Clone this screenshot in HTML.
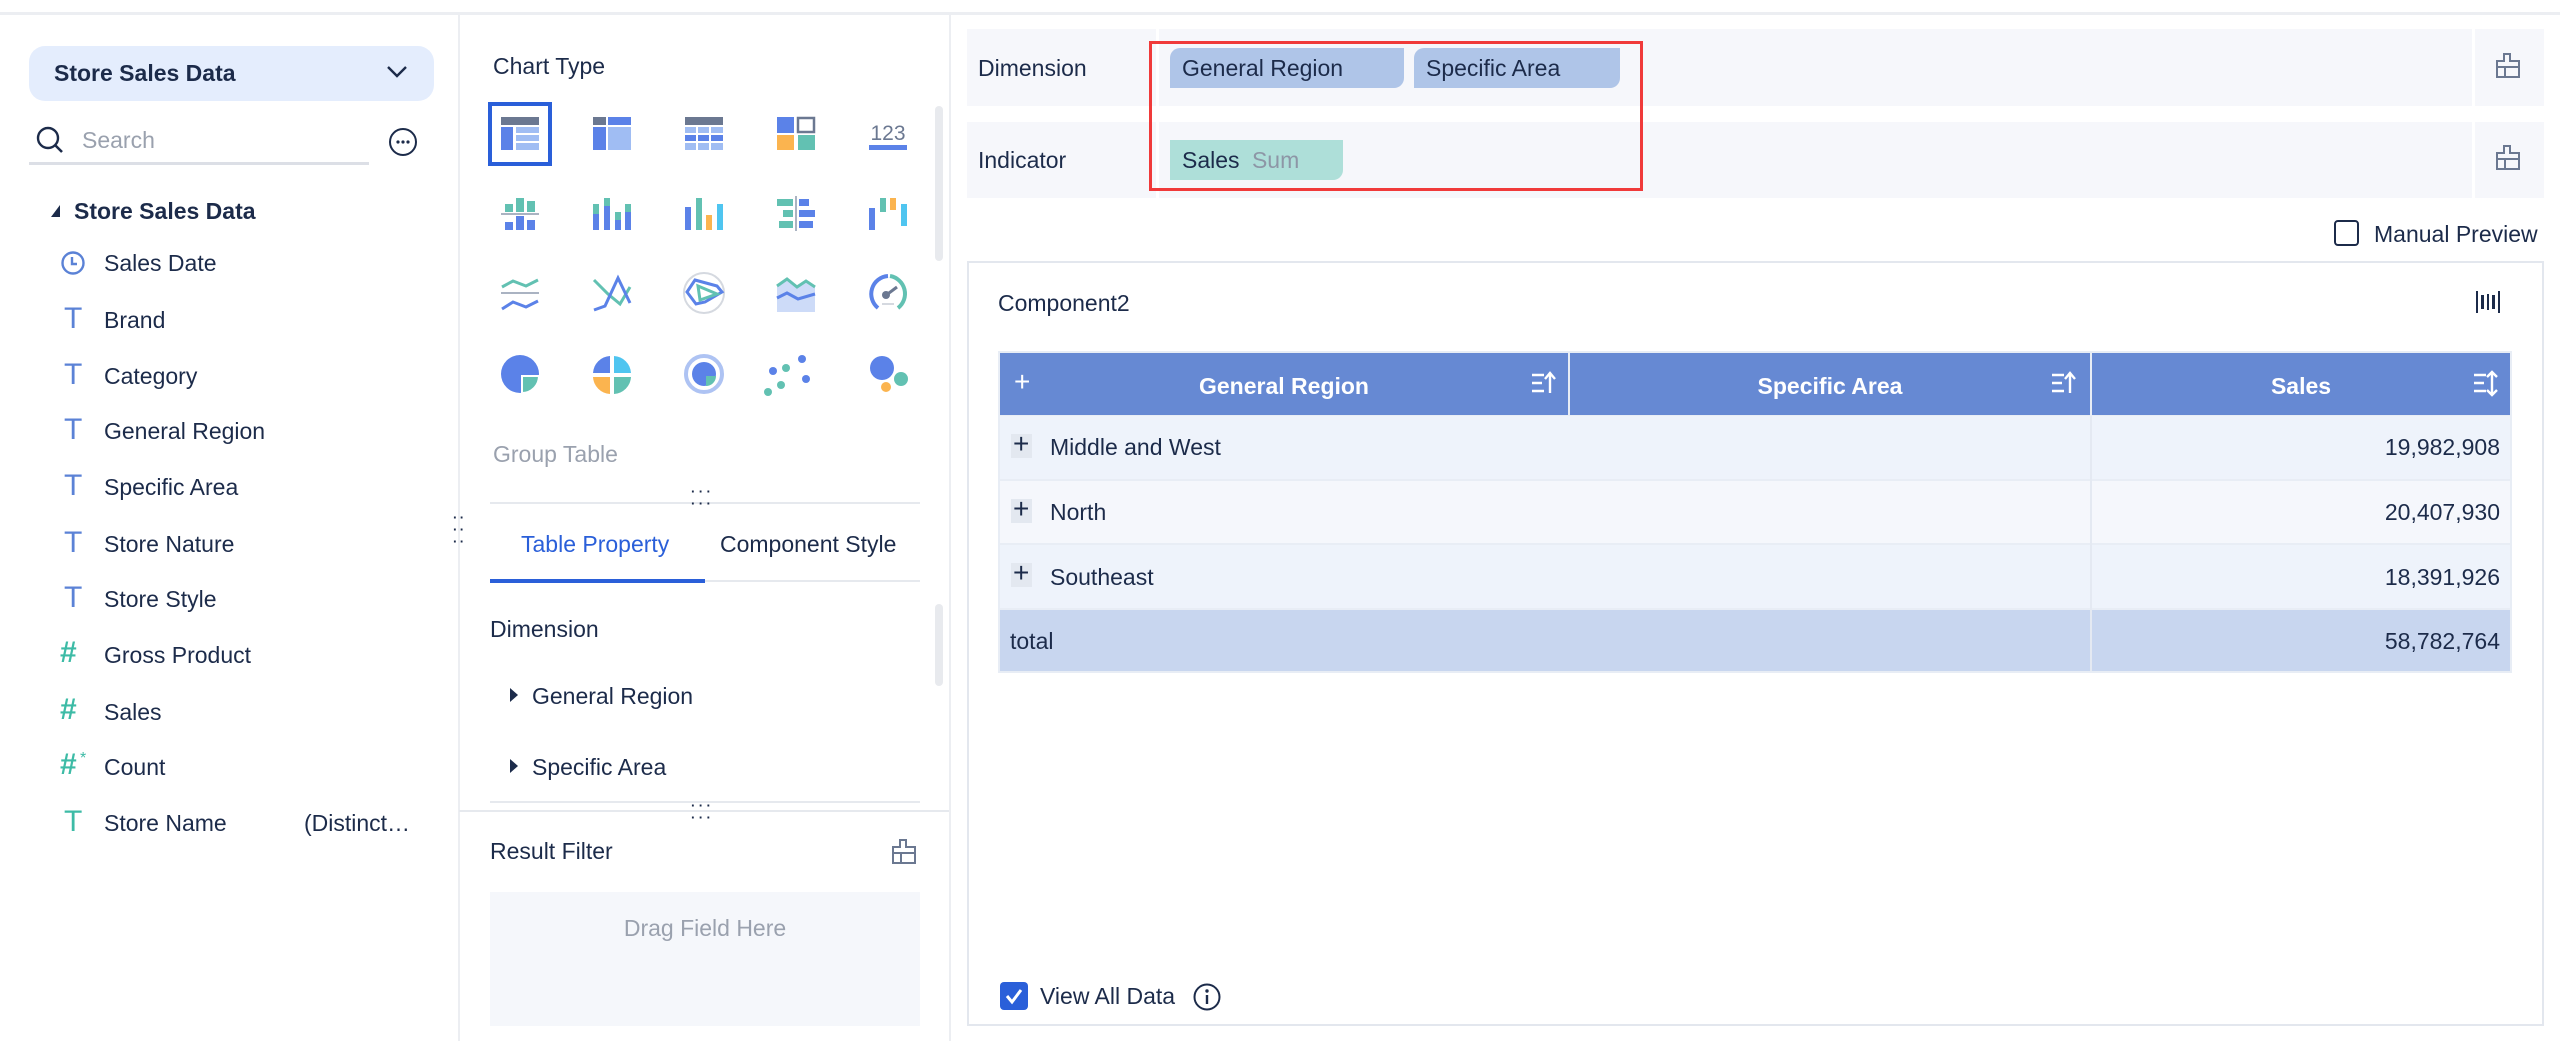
<!DOCTYPE html>
<html><head><meta charset="utf-8">
<style>
*{margin:0;padding:0;box-sizing:border-box}
body{width:2560px;height:1041px;background:#fff;font-family:"Liberation Sans",sans-serif;color:#1c2b4a;position:relative;overflow:hidden}
.a{position:absolute}
.t{position:absolute;font-size:23px;line-height:28px;white-space:nowrap}
</style></head><body>
<div class="a" style="left:0;top:12px;width:2560px;height:3px;background:#eceef2"></div>
<div class="a" style="left:458px;top:14px;width:2px;height:1027px;background:#eceef2"></div>
<div class="a" style="left:949px;top:14px;width:2px;height:1027px;background:#eceef2"></div>

<!-- left panel -->
<div class="a" style="left:29px;top:46px;width:405px;height:55px;background:#e4edfd;border-radius:16px"></div>
<div class="t" style="left:54px;top:59px;font-weight:bold;font-size:23px">Store Sales Data</div>
<svg class="a" style="left:386px;top:64px" width="22" height="16"><path d="M2 3 L11 12 L20 3" stroke="#1c2b4a" stroke-width="2.4" fill="none"/></svg>
<svg class="a" style="left:34px;top:124px" width="32" height="32"><circle cx="14" cy="14" r="10" stroke="#1c2b4a" stroke-width="2.4" fill="none"/><path d="M21 21 L28 28" stroke="#1c2b4a" stroke-width="2.6"/></svg>
<div class="t" style="left:82px;top:126px;color:#9aa1ae">Search</div>
<div class="a" style="left:29px;top:162px;width:340px;height:3px;background:#dcdfe6"></div>
<svg class="a" style="left:387px;top:126px" width="32" height="32"><circle cx="16" cy="16" r="13" stroke="#1c2b4a" stroke-width="2" fill="none"/><circle cx="11" cy="16" r="1.6" fill="#1c2b4a"/><circle cx="16" cy="16" r="1.6" fill="#1c2b4a"/><circle cx="21" cy="16" r="1.6" fill="#1c2b4a"/></svg>
<svg class="a" style="left:50px;top:204px" width="12" height="14"><path d="M10 1 L10 13 L1 13 Z" fill="#1c2b4a"/></svg>
<div class="t" style="left:74px;top:197px;font-weight:bold">Store Sales Data</div>

<svg class="a" style="left:60px;top:250px" width="26" height="26"><circle cx="13" cy="13" r="10.5" stroke="#5b82d6" stroke-width="2.4" fill="none"/><path d="M12 7 V14 H17" stroke="#5b82d6" stroke-width="2.4" fill="none"/></svg>
<div class="t" style="left:104px;top:249px">Sales Date</div>

<div class="t" style="left:64px;top:305px;color:#5b82d6;font-size:30px">T</div><div class="t" style="left:104px;top:306px">Brand</div>
<div class="t" style="left:64px;top:361px;color:#5b82d6;font-size:30px">T</div><div class="t" style="left:104px;top:362px">Category</div>
<div class="t" style="left:64px;top:416px;color:#5b82d6;font-size:30px">T</div><div class="t" style="left:104px;top:417px">General Region</div>
<div class="t" style="left:64px;top:472px;color:#5b82d6;font-size:30px">T</div><div class="t" style="left:104px;top:473px">Specific Area</div>
<div class="t" style="left:64px;top:529px;color:#5b82d6;font-size:30px">T</div><div class="t" style="left:104px;top:530px">Store Nature</div>
<div class="t" style="left:64px;top:584px;color:#5b82d6;font-size:30px">T</div><div class="t" style="left:104px;top:585px">Store Style</div>
<div class="t" style="left:60px;top:639px;color:#3dbba6;font-size:30px;font-weight:bold">#</div><div class="t" style="left:104px;top:641px">Gross Product</div>
<div class="t" style="left:60px;top:696px;color:#3dbba6;font-size:30px;font-weight:bold">#</div><div class="t" style="left:104px;top:698px">Sales</div>
<div class="t" style="left:60px;top:751px;color:#3dbba6;font-size:30px;font-weight:bold">#</div><div class="t" style="left:80px;top:745px;color:#3dbba6;font-size:16px">*</div><div class="t" style="left:104px;top:753px">Count</div>
<div class="t" style="left:64px;top:808px;color:#3dbba6;font-size:30px">T</div><div class="t" style="left:104px;top:809px">Store Name</div>
<div class="t" style="left:304px;top:809px">(Distinct…</div>

<!-- middle panel -->
<div class="t" style="left:493px;top:52px">Chart Type</div>
<div class="a" style="left:488px;top:102px;width:64px;height:64px;border:4px solid #2a5fd9"></div>
<svg class="a" style="left:480px;top:90px" width="440" height="330">
<!-- row1 -->
<rect x="21" y="27" width="38" height="8" fill="#6b7891"/><rect x="21" y="37" width="12" height="23" fill="#5b82e8"/><rect x="36" y="37" width="23" height="6" fill="#a0bdf3"/><rect x="36" y="45" width="23" height="6" fill="#a0bdf3"/><rect x="36" y="53" width="23" height="7" fill="#a0bdf3"/>
<rect x="113" y="27" width="13" height="8" fill="#6b7891"/><rect x="128" y="27" width="23" height="8" fill="#5b82e8"/><rect x="113" y="37" width="13" height="23" fill="#5b82e8"/><rect x="128" y="37" width="23" height="23" fill="#a0bdf3"/>
<rect x="205" y="27" width="38" height="8" fill="#6b7891"/><rect x="205" y="37" width="38" height="6" fill="#a0bdf3"/><rect x="205" y="45" width="38" height="6" fill="#5b82e8"/><rect x="205" y="53" width="38" height="7" fill="#a0bdf3"/><path d="M217 37 V60 M230 37 V60" stroke="#fff" stroke-width="2"/>
<rect x="297" y="27" width="17" height="16" fill="#5b82e8"/><rect x="318" y="28" width="16" height="14" fill="none" stroke="#6b7891" stroke-width="2.5"/><rect x="297" y="45" width="17" height="15" fill="#fbb44f"/><rect x="318" y="45" width="17" height="15" fill="#62c1b2"/>
<text x="408" y="50" font-size="21" fill="#6b7891" text-anchor="middle" font-family="Liberation Sans">123</text><rect x="389" y="55" width="38" height="5" fill="#5b82e8"/>
<!-- row2 -->
<rect x="25" y="114" width="8" height="8" fill="#62c1b2"/><rect x="36" y="108" width="8" height="14" fill="#62c1b2"/><rect x="47" y="111" width="8" height="11" fill="#62c1b2"/><rect x="21" y="123" width="38" height="2" fill="#aab3c2"/><rect x="25" y="132" width="8" height="8" fill="#5b82e8"/><rect x="36" y="126" width="8" height="14" fill="#5b82e8"/><rect x="47" y="130" width="8" height="10" fill="#5b82e8"/>
<rect x="113" y="114" width="6" height="26" fill="#5b82e8"/><rect x="113" y="114" width="6" height="10" fill="#62c1b2"/><rect x="124" y="108" width="6" height="32" fill="#5b82e8"/><rect x="124" y="108" width="6" height="8" fill="#62c1b2"/><rect x="135" y="122" width="6" height="18" fill="#5b82e8"/><rect x="135" y="122" width="6" height="8" fill="#62c1b2"/><rect x="145" y="114" width="6" height="26" fill="#5b82e8"/><rect x="145" y="114" width="6" height="8" fill="#62c1b2"/>
<rect x="205" y="117" width="6" height="23" fill="#5b82e8"/><rect x="216" y="108" width="6" height="32" fill="#62c1b2"/><rect x="226" y="125" width="6" height="15" fill="#fbb44f"/><rect x="237" y="114" width="6" height="26" fill="#4fc5f0"/>
<rect x="297" y="109" width="16" height="7" fill="#62c1b2"/><rect x="303" y="120" width="10" height="7" fill="#62c1b2"/><rect x="299" y="131" width="14" height="7" fill="#62c1b2"/><rect x="315" y="106" width="2" height="35" fill="#aab3c2"/><rect x="319" y="109" width="10" height="7" fill="#5b82e8"/><rect x="319" y="120" width="16" height="7" fill="#5b82e8"/><rect x="319" y="131" width="14" height="7" fill="#5b82e8"/>
<rect x="389" y="118" width="6" height="22" fill="#5b82e8"/><rect x="400" y="108" width="6" height="14" fill="#62c1b2"/><rect x="410" y="108" width="6" height="12" fill="#fbb44f"/><rect x="421" y="114" width="6" height="22" fill="#4fc5f0"/>
<!-- row3 -->
<path d="M22 197 L33 191 L46 196 L58 190" stroke="#62c1b2" stroke-width="3" fill="none"/><rect x="21" y="202" width="38" height="2" fill="#aab3c2"/><path d="M22 219 L33 212 L46 217 L58 211" stroke="#5b82e8" stroke-width="3" fill="none"/>
<path d="M114 190 L128 204 L140 214 L150 197" stroke="#62c1b2" stroke-width="3" fill="none"/><path d="M114 220 L125 216 L138 188 L150 213" stroke="#5b82e8" stroke-width="3" fill="none"/>
<circle cx="224" cy="203" r="20" stroke="#d5d9e0" stroke-width="2" fill="none"/><path d="M215 190 L237 196 L242 202 L225 212 L216 214 L207 202 Z" stroke="#5b82e8" stroke-width="3" fill="none"/><path d="M218 196 L237 204 L220 210 Z" stroke="#62c1b2" stroke-width="3" fill="none"/>
<path d="M297 196 L307 189 L317 197 L326 191 L335 197 V222 H297 Z" fill="#cddbf8"/><path d="M297 196 L307 189 L317 197 L326 191 L335 197" stroke="#62c1b2" stroke-width="3" fill="none"/><path d="M297 208 L307 203 L318 209 L335 204" stroke="#5b82e8" stroke-width="3" fill="none"/>
<path d="M398 218 A18 18 0 0 1 408 186" stroke="#5b82e8" stroke-width="4" fill="none"/><path d="M410 186 A18 18 0 0 1 418 218" stroke="#62c1b2" stroke-width="4" fill="none"/><path d="M405 206 L417 197" stroke="#6b7891" stroke-width="3"/><circle cx="406" cy="205" r="4" fill="#6b7891"/><rect x="402" y="213" width="12" height="2" fill="#d5d9e0"/>
<!-- row4 -->
<circle cx="40" cy="284" r="19" fill="#5b82e8"/><path d="M42 286 H59 A17 17 0 0 1 42 303 Z" fill="#62c1b2" stroke="#fff" stroke-width="2"/>
<path d="M130 266 A18 18 0 0 0 113 283 H130 Z" fill="#5b82e8"/><path d="M134 266 A18 18 0 0 1 151 283 H134 Z" fill="#4fc5f0"/><path d="M113 287 A18 18 0 0 0 130 304 V287 Z" fill="#fbb44f"/><path d="M134 287 H151 A18 18 0 0 1 134 304 Z" fill="#62c1b2"/>
<circle cx="224" cy="284" r="18" stroke="#aec3f3" stroke-width="4" fill="none"/><circle cx="224" cy="284" r="12" fill="#5b82e8"/><path d="M226 286 H236 A10 10 0 0 1 226 296 Z" fill="#62c1b2"/>
<circle cx="322" cy="269" r="4" fill="#5b82e8"/><circle cx="306" cy="278" r="4" fill="#62c1b2"/><circle cx="326" cy="289" r="4" fill="#5b82e8"/><circle cx="293" cy="281" r="4" fill="#5b82e8"/><circle cx="301" cy="295" r="4" fill="#62c1b2"/><circle cx="288" cy="302" r="4" fill="#62c1b2"/>
<circle cx="402" cy="278" r="12" fill="#5b82e8"/><circle cx="421" cy="289" r="7" fill="#62c1b2"/><circle cx="406" cy="297" r="5" fill="#fbb44f"/>
</svg>
<div class="a" style="left:935px;top:106px;width:8px;height:155px;background:#e8eaee;border-radius:4px"></div>
<div class="t" style="left:493px;top:440px;color:#9aa1ae">Group Table</div>
<div class="a" style="left:490px;top:502px;width:430px;height:2px;background:#e6e9ee"></div>
<div class="t" style="left:690px;top:486px;font-size:18px;letter-spacing:2px;line-height:12px">⋅⋅⋅<br>⋅⋅⋅</div>
<div class="t" style="left:452px;top:512px;font-size:18px;letter-spacing:1px;line-height:12px">⋅⋅<br>⋅⋅<br>⋅⋅</div>
<div class="t" style="left:521px;top:530px;color:#2a5fd9">Table Property</div>
<div class="t" style="left:720px;top:530px">Component Style</div>
<div class="a" style="left:490px;top:580px;width:430px;height:2px;background:#e6e9ee"></div>
<div class="a" style="left:490px;top:579px;width:215px;height:4px;background:#2a5fd9"></div>
<div class="t" style="left:490px;top:615px">Dimension</div>
<svg class="a" style="left:508px;top:686px" width="12" height="18"><path d="M2 2 L10 9 L2 16Z" fill="#1c2b4a"/></svg>
<div class="t" style="left:532px;top:682px">General Region</div>
<svg class="a" style="left:508px;top:757px" width="12" height="18"><path d="M2 2 L10 9 L2 16Z" fill="#1c2b4a"/></svg>
<div class="t" style="left:532px;top:753px">Specific Area</div>
<div class="a" style="left:935px;top:604px;width:8px;height:82px;background:#e8eaee;border-radius:4px"></div>
<div class="a" style="left:490px;top:801px;width:430px;height:2px;background:#e6e9ee"></div>
<div class="a" style="left:459px;top:810px;width:490px;height:2px;background:#e6e9ee"></div>
<div class="t" style="left:690px;top:800px;font-size:18px;letter-spacing:2px;line-height:12px">⋅⋅⋅<br>⋅⋅⋅</div>
<div class="t" style="left:490px;top:837px">Result Filter</div>
<svg class="a" style="left:890px;top:838px" width="28" height="28"><path d="M10 2 H16 V9 H25 V25 H3 V9 H10 Z M3 15 H25 M11 15 V25" stroke="#6b7891" stroke-width="2" fill="none"/></svg>
<div class="a" style="left:490px;top:892px;width:430px;height:134px;background:#f5f7fb"></div>
<div class="t" style="left:490px;top:914px;width:430px;text-align:center;color:#9aa1ae">Drag Field Here</div>

<!-- right -->
<div class="a" style="left:967px;top:29px;width:1577px;height:77px;background:#f6f7fb"></div>
<div class="a" style="left:967px;top:122px;width:1577px;height:76px;background:#f6f7fb"></div>
<div class="a" style="left:1156px;top:29px;width:3px;height:77px;background:#fff"></div>
<div class="a" style="left:1156px;top:122px;width:3px;height:76px;background:#fff"></div>
<div class="a" style="left:2472px;top:29px;width:3px;height:77px;background:#fff"></div>
<div class="a" style="left:2472px;top:122px;width:3px;height:76px;background:#fff"></div>
<div class="t" style="left:978px;top:54px">Dimension</div>
<div class="t" style="left:978px;top:146px">Indicator</div>
<div class="a" style="left:1170px;top:48px;width:234px;height:40px;background:#afc5e8;border-radius:10px 0 10px 0"></div>
<div class="t" style="left:1182px;top:54px">General Region</div>
<div class="a" style="left:1414px;top:48px;width:206px;height:40px;background:#afc5e8;border-radius:10px 0 10px 0"></div>
<div class="t" style="left:1426px;top:54px">Specific Area</div>
<div class="a" style="left:1170px;top:140px;width:173px;height:40px;background:#aedfd9;border-radius:0 0 10px 0"></div>
<div class="t" style="left:1182px;top:146px">Sales <span style="color:#8d96a6;margin-left:6px">Sum</span></div>
<div class="a" style="left:1149px;top:41px;width:494px;height:150px;border:3px solid #f03a3a"></div>
<svg class="a" style="left:2494px;top:52px" width="28" height="28"><path d="M10 2 H16 V9 H25 V25 H3 V9 H10 Z M3 15 H25 M11 15 V25" stroke="#6b7891" stroke-width="2" fill="none"/></svg>
<svg class="a" style="left:2494px;top:144px" width="28" height="28"><path d="M10 2 H16 V9 H25 V25 H3 V9 H10 Z M3 15 H25 M11 15 V25" stroke="#6b7891" stroke-width="2" fill="none"/></svg>
<div class="a" style="left:2334px;top:220px;width:25px;height:26px;border:2px solid #1c2b4a;border-radius:4px"></div>
<div class="t" style="left:2374px;top:220px">Manual Preview</div>

<div class="a" style="left:967px;top:261px;width:1577px;height:765px;border:2px solid #e3e7ee"></div>
<div class="t" style="left:998px;top:289px">Component2</div>
<svg class="a" style="left:2474px;top:288px" width="28" height="28"><path d="M3 3 V25 M25 3 V25 M14 6 V22" stroke="#1c2b4a" stroke-width="2"/><rect x="7" y="7" width="3" height="14" fill="#1c2b4a"/><rect x="18" y="7" width="3" height="14" fill="#1c2b4a"/></svg>

<div class="a" style="left:998px;top:351px;width:1514px;height:322px;background:#e8edf5"></div>
<div class="a" style="left:1000px;top:353px;width:1510px;height:62px;background:#6689d3"></div>
<div class="a" style="left:1568px;top:353px;width:2px;height:62px;background:#e8edf5"></div>
<div class="a" style="left:2090px;top:353px;width:2px;height:62px;background:#e8edf5"></div>
<div class="t" style="left:1014px;top:368px;color:#fff;font-size:28px">+</div>
<div class="t" style="left:1000px;top:372px;width:568px;text-align:center;color:#fff;font-weight:bold">General Region</div>
<div class="t" style="left:1570px;top:372px;width:520px;text-align:center;color:#fff;font-weight:bold">Specific Area</div>
<div class="t" style="left:2092px;top:372px;width:418px;text-align:center;color:#fff;font-weight:bold">Sales</div>
<svg class="a" style="left:1530px;top:370px" width="26" height="26"><path d="M2 5 H14 M2 13 H12 M2 21 H14 M20 23 V4 M15 9 L20 3 L25 9" stroke="#fff" stroke-width="2.4" fill="none"/></svg>
<svg class="a" style="left:2050px;top:370px" width="26" height="26"><path d="M2 5 H14 M2 13 H12 M2 21 H14 M20 23 V4 M15 9 L20 3 L25 9" stroke="#fff" stroke-width="2.4" fill="none"/></svg>
<svg class="a" style="left:2472px;top:370px" width="28" height="28"><path d="M2 5 H14 M2 13 H12 M2 21 H14 M20 2 V25 M15 7 L20 2 L25 7 M15 20 L20 25 L25 20" stroke="#fff" stroke-width="2.4" fill="none"/></svg>

<div class="a" style="left:1000px;top:416px;width:1510px;height:63px;background:#eef3fb"></div>
<div class="a" style="left:1000px;top:481px;width:1510px;height:62px;background:#f5f7fc"></div>
<div class="a" style="left:1000px;top:545px;width:1510px;height:63px;background:#eef3fb"></div>
<div class="a" style="left:1000px;top:610px;width:1510px;height:61px;background:#c8d6ef"></div>
<div class="a" style="left:2090px;top:416px;width:2px;height:255px;background:#e4e9f2"></div>
<div class="a" style="left:1011px;top:434px;width:21px;height:24px;background:#e3e8f0"></div><div class="t" style="left:1013px;top:430px;font-size:28px">+</div>
<div class="t" style="left:1050px;top:433px">Middle and West</div>
<div class="a" style="left:1011px;top:499px;width:21px;height:24px;background:#e3e8f0"></div><div class="t" style="left:1013px;top:495px;font-size:28px">+</div>
<div class="t" style="left:1050px;top:498px">North</div>
<div class="a" style="left:1011px;top:563px;width:21px;height:24px;background:#e3e8f0"></div><div class="t" style="left:1013px;top:559px;font-size:28px">+</div>
<div class="t" style="left:1050px;top:563px">Southeast</div>
<div class="t" style="left:1010px;top:627px">total</div>
<div class="t" style="left:2200px;top:433px;width:300px;text-align:right">19,982,908</div>
<div class="t" style="left:2200px;top:498px;width:300px;text-align:right">20,407,930</div>
<div class="t" style="left:2200px;top:563px;width:300px;text-align:right">18,391,926</div>
<div class="t" style="left:2200px;top:627px;width:300px;text-align:right">58,782,764</div>

<div class="a" style="left:1000px;top:982px;width:28px;height:28px;background:#2a5fd9;border-radius:4px"></div>
<svg class="a" style="left:1000px;top:982px" width="28" height="28"><path d="M7 14 L12 20 L21 8" stroke="#fff" stroke-width="3" fill="none"/></svg>
<div class="t" style="left:1040px;top:982px">View All Data</div>
<svg class="a" style="left:1192px;top:982px" width="30" height="30"><circle cx="15" cy="15" r="12.5" stroke="#1c2b4a" stroke-width="2" fill="none"/><circle cx="15" cy="9" r="1.7" fill="#1c2b4a"/><path d="M15 13 V22" stroke="#1c2b4a" stroke-width="2.4"/></svg>
</body></html>
